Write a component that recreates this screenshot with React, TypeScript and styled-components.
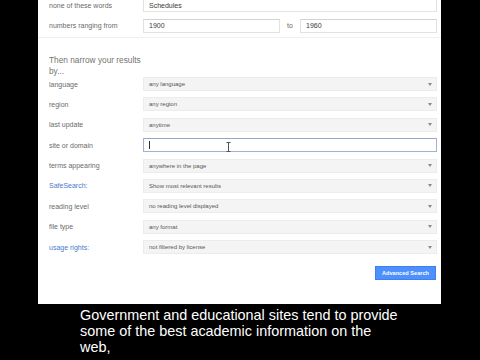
import React from "react";
import styled, { createGlobalStyle } from "styled-components";

const Global = createGlobalStyle`
  html, body { margin: 0; padding: 0; background: #000; }
  body { font-family: "Liberation Sans", Arial, sans-serif; }
`;

const Screen = styled.div`
  width: 480px;
  height: 360px;
  background: #000;
  overflow: hidden;
`;

const Panel = styled.div`
  margin-left: 38px;
  width: 403px;
  height: 304px;
  background: #fff;
  overflow: hidden;
  box-sizing: border-box;
  padding: 0 4px 0 11px;
  display: flex;
  flex-direction: column;
`;

const Rows = styled.div<{ $gap: number; $top?: number }>`
  display: flex;
  flex-direction: column;
  gap: ${(p) => p.$gap}px;
  margin-top: ${(p) => p.$top ?? 0}px;
`;

const Row = styled.div`
  display: grid;
  grid-template-columns: 94px 1fr;
  align-items: center;
  height: 14px;
`;

const Label = styled.div<{ $link?: boolean }>`
  font-size: 7px;
  color: ${(p) => (p.$link ? "#4a7bc8" : "#6a6a6a")};
  white-space: nowrap;
`;

const Input = styled.div<{ $focus?: boolean }>`
  position: relative;
  height: 14px;
  box-sizing: border-box;
  border: 1px solid ${(p) => (p.$focus ? "#a3b3cb" : "#e2e2e2")};
  border-top-color: ${(p) => (p.$focus ? "#97a8c2" : "#d2d2d2")};
  background: #fff;
  font-size: 7px;
  color: #3a3a3a;
  display: flex;
  align-items: center;
  padding-left: 5px;
  flex: 1;
`;

const Select = styled.div`
  height: 14px;
  box-sizing: border-box;
  border: 1px solid #ececec;
  background: #f4f4f4;
  font-size: 6px;
  color: #555;
  display: flex;
  align-items: center;
  justify-content: space-between;
  padding: 0 4px 0 5px;
`;

const Arrow = styled.span`
  width: 0;
  height: 0;
  border-left: 2px solid transparent;
  border-right: 2px solid transparent;
  border-top: 3px solid #8a8a8a;
`;

const Range = styled.div`
  display: flex;
  align-items: center;
`;

const To = styled.span`
  width: 20px;
  text-align: center;
  font-size: 7px;
  color: #6a6a6a;
`;

const Divider = styled.div`
  height: 1px;
  background: #efefef;
  margin-top: 4.5px;
  margin-left: -11px;
  margin-right: -4px;
`;

const Heading = styled.div`
  margin-top: 17px;
  width: 94px;
  font-size: 8.3px;
  line-height: 11px;
  color: #747474;
`;

const Caret = styled.span`
  width: 1px;
  height: 8px;
  background: #333;
`;

const IBeam = styled.svg`
  position: absolute;
  left: 82px;
  top: 3px;
`;

const Footer = styled.div`
  display: flex;
  justify-content: flex-end;
  margin-top: 11.5px;
  padding-right: 1px;
`;

const Button = styled.div`
  width: 61px;
  height: 14px;
  background: #4d90fe;
  border: 1px solid #3f80ea;
  box-sizing: border-box;
  color: #fff;
  font-size: 5.6px;
  font-weight: bold;
  display: flex;
  align-items: center;
  justify-content: center;
`;

const Caption = styled.div`
  margin: 3px 0 0 80px;
  color: #fff;
  font-size: 14.4px;
  line-height: 16px;
  white-space: nowrap;
`;

const filters: { label: string; value?: string; link?: boolean; input?: boolean }[] = [
  { label: "language", value: "any language" },
  { label: "region", value: "any region" },
  { label: "last update", value: "anytime" },
  { label: "site or domain", input: true },
  { label: "terms appearing", value: "anywhere in the page" },
  { label: "SafeSearch:", value: "Show most relevant results", link: true },
  { label: "reading level", value: "no reading level displayed" },
  { label: "file type", value: "any format" },
  { label: "usage rights:", value: "not filtered by license", link: true },
];

export default function App() {
  return (
    <Screen>
      <Global />
      <Panel>
        <Rows $gap={6.5} $top={-2}>
          <Row>
            <Label>none of these words</Label>
            <Input>Schedules</Input>
          </Row>
          <Row>
            <Label>numbers ranging from</Label>
            <Range>
              <Input>1900</Input>
              <To>to</To>
              <Input>1960</Input>
            </Range>
          </Row>
        </Rows>
        <Divider />
        <Heading>Then narrow your results by...</Heading>
        <Rows $gap={6.375}>
          {filters.map((f) => (
            <Row key={f.label}>
              <Label $link={f.link}>{f.label}</Label>
              {f.input ? (
                <Input $focus>
                  <Caret />
                  <IBeam width="5" height="10" viewBox="0 0 5 10">
                    <path d="M0.5 0.5h4M2.5 0.5v9M0.5 9.5h4" stroke="#555" strokeWidth="1" fill="none" />
                  </IBeam>
                </Input>
              ) : (
                <Select>
                  <span>{f.value}</span>
                  <Arrow />
                </Select>
              )}
            </Row>
          ))}
        </Rows>
        <Footer>
          <Button>Advanced Search</Button>
        </Footer>
      </Panel>
      <Caption>
        Government and educational sites tend to provide
        <br />
        some of the best academic information on the
        <br />
        web,
      </Caption>
    </Screen>
  );
}
